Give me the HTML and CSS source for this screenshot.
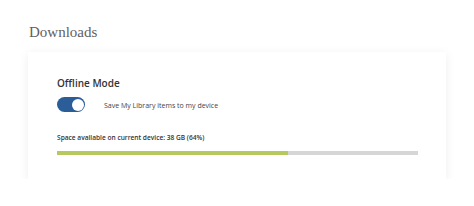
FILE: index.html
```html
<!DOCTYPE html>
<html lang="en">
<head>
    <meta charset="utf-8">
    <link rel="stylesheet" href="styles.css">
</head>
<body>
    <main class="downloads">
        <h1 class="page-title">Downloads</h1>

        <!-- offline card -->
        <section class="card">
            <h2 class="card-title">Offline Mode</h2>
            <label class="toggle-row">
                <span class="toggle on"><span class="knob"></span></span>
                <span class="toggle-label">Save My Library items to my device</span>
            </label>
            <div class="space-label">Space available on current device: 38 GB (64%)</div>
            <div class="bar">
                <div class="bar-fill" style="width: 64%"></div>
            </div>
        </section>
    </main>
</body>
</html>
```

FILE: styles.css
```css
body {
    margin: 0;
    background: #fff;
    font-family: 'Open Sans', sans-serif;
    color: #333;
}

.downloads {
    padding: 23px 28px 0 28px;
    width: 418px;
}

.page-title {
    margin: 0 0 10px 1px;
    font-family: 'Liberation Serif', serif;
    font-weight: normal;
    font-size: 15px;
    line-height: 19px;
    color: #5f5f5f;
}

.card {
    background: #fff;
    box-shadow: 0 2px 10px rgba(0,0,0,0.07);
    padding: 24px 29px 24px 29px;
}

.card-title {
    margin: 0 0 7px 0;
    font-size: 10px;
    font-weight: 600;
    line-height: 14px;
    color: #333;
}

.toggle-row {
    display: flex;
    align-items: center;
    gap: 19px;
}

.toggle {
    position: relative;
    width: 28px;
    height: 15px;
    border-radius: 8px;
    background: #2b5e98;
    flex-shrink: 0;
}

.toggle .knob {
    position: absolute;
    top: 1.5px;
    right: 1.5px;
    width: 12px;
    height: 12px;
    border-radius: 50%;
    background: #fff;
}

.toggle-label {
    font-size: 7px;
    color: #444;
    line-height: 10px;
    padding-top: 3px;
}

.space-label {
    margin-top: 21px;
    font-size: 6.6px;
    font-weight: 600;
    color: #333;
    line-height: 10px;
}

.bar {
    margin-top: 8px;
    height: 4px;
    background: #d6d6d6;
    width: 361px;
}

.bar-fill {
    height: 100%;
    background: #b6c95f;
}
```
